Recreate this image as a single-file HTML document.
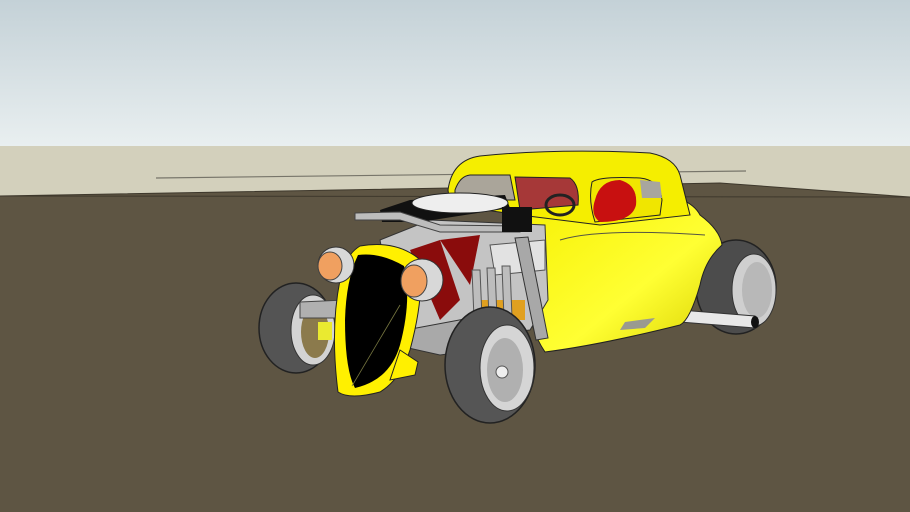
<!DOCTYPE html>
<html><head><meta charset="utf-8"><style>
html,body{margin:0;padding:0;width:910px;height:512px;overflow:hidden}
svg{display:block}
</style></head><body>
<svg width="910" height="512" viewBox="0 0 910 512" xmlns="http://www.w3.org/2000/svg">
<defs>
<linearGradient id="sky" x1="0" y1="0" x2="0" y2="1">
<stop offset="0" stop-color="#c4d1d7"/><stop offset="1" stop-color="#e9eff0"/>
</linearGradient>
<linearGradient id="yel" x1="0" y1="0" x2="1" y2="1">
<stop offset="0" stop-color="#f6f000"/><stop offset="0.6" stop-color="#ffff33"/><stop offset="1" stop-color="#d8d000"/>
</linearGradient>
</defs>
<rect width="910" height="146" fill="url(#sky)"/>
<rect y="146" width="910" height="60" fill="#d3d0bc"/>
<line x1="156" y1="178" x2="746" y2="171" stroke="#77756a" stroke-width="1.2"/>
<polygon points="0,196 450,188 720,183 910,197 910,512 0,512" fill="#5e5543"/>
<polygon points="0,196 450,188 720,183 910,197" fill="none" stroke="#3e382c" stroke-width="1"/>

<!-- rear wheel -->
<ellipse cx="736" cy="287" rx="40" ry="47" fill="#4c4c4c" stroke="#222" stroke-width="1.5"/>
<ellipse cx="754" cy="290" rx="22" ry="36" fill="#cfcfcf" stroke="#333"/>
<ellipse cx="757" cy="290" rx="15" ry="28" fill="#b8b8b8"/>
<!-- exhaust -->
<path d="M680,310 L755,316 L755,328 L680,322 Z" fill="#e8e8e8" stroke="#333"/>
<ellipse cx="755" cy="322" rx="4" ry="6" fill="#111"/>

<!-- body -->
<path d="M520,205 Q560,190 640,190 Q690,195 700,215 Q720,230 722,245 Q705,260 700,285 Q690,320 680,325 Q600,345 545,352 Q530,330 528,300 Z" fill="url(#yel)" stroke="#222"/>
<!-- roof -->
<path d="M448,190 Q452,160 480,156 Q560,148 650,153 Q675,158 680,175 L690,215 L600,225 L520,215 L450,205 Z" fill="#f5ee00" stroke="#222"/>
<path d="M455,190 Q460,176 470,175 L510,175 L515,200 L455,200 Z" fill="#aaa59a" stroke="#222"/>
<path d="M515,177 L570,178 Q580,185 578,205 L520,210 Z" fill="#a63838" stroke="#222"/>
<path d="M592,182 Q600,176 640,178 Q660,180 662,200 L660,215 L595,222 Q588,200 592,182 Z" fill="#f0e600" stroke="#222"/>
<path d="M595,200 Q600,180 620,180 Q638,185 636,205 Q632,222 600,222 Q590,215 595,200 Z" fill="#c81010"/>
<path d="M640,180 L660,182 L662,198 L642,198 Z" fill="#a8a69e"/>
<ellipse cx="560" cy="205" rx="14" ry="10" fill="none" stroke="#222" stroke-width="3"/>
<path d="M625,322 L655,318 L645,328 L620,330 Z" fill="#9a9a90"/>
<path d="M560,240 Q600,228 705,235" fill="none" stroke="#554" stroke-width="1"/>

<!-- engine -->
<path d="M380,240 L430,220 L545,225 L548,300 L530,330 L440,340 L395,320 Z" fill="#c4c4c4" stroke="#333"/>
<path d="M410,250 L440,240 L460,300 L440,320 Z" fill="#8a0c0c"/>
<path d="M440,240 L480,235 L470,285 Z" fill="#8a0c0c"/>
<path d="M490,245 L545,240 L545,270 L495,275 Z" fill="#e2e2e2" stroke="#555"/>
<path d="M480,300 L525,300 L525,320 L480,320 Z" fill="#e0a020"/>
<g stroke="#555" fill="#bdbdbd">
<path d="M472,270 L480,270 L482,318 L474,318 Z"/>
<path d="M487,268 L495,268 L497,318 L489,318 Z"/>
<path d="M502,266 L510,266 L512,318 L504,318 Z"/>
</g>
<!-- air cleaner -->
<path d="M380,210 L410,200 L505,195 L510,208 L420,222 L382,222 Z" fill="#111"/>
<ellipse cx="460" cy="203" rx="48" ry="10" fill="#eeeeee" stroke="#222"/>
<path d="M355,213 L400,212 L440,225 L520,226 L520,232 L440,232 L400,220 L355,220 Z" fill="#bdbdbd" stroke="#444"/>
<rect x="502" y="207" width="30" height="25" fill="#111"/>
<!-- upright pipe -->
<path d="M515,238 L528,237 L548,338 L536,340 Z" fill="#a8a8a8" stroke="#333"/>

<!-- frame under -->
<path d="M395,332 L470,318 L520,322 L515,345 L440,355 L395,345 Z" fill="#a9a9a9" stroke="#333"/>

<!-- front left wheel -->
<ellipse cx="296" cy="328" rx="37" ry="45" fill="#545454" stroke="#222" stroke-width="1.5"/>
<ellipse cx="313" cy="330" rx="22" ry="35" fill="#d3d3d3" stroke="#333"/>
<ellipse cx="315" cy="332" rx="14" ry="26" fill="#8b7a4c"/>
<rect x="318" y="322" width="14" height="18" fill="#eaea30"/>
<path d="M300,302 L345,300 L345,318 L300,318 Z" fill="#b0b0b0" stroke="#444"/>

<!-- grille shell -->
<path d="M360,246 Q395,240 418,258 Q426,290 410,350 Q400,380 380,392 Q350,400 338,392 Q330,330 340,280 Q345,255 360,246 Z" fill="#fff000" stroke="#222"/>
<path d="M358,255 Q380,252 404,266 Q412,300 400,345 Q390,380 355,388 Q345,370 345,320 Q346,280 358,255 Z" fill="#000"/>
<line x1="400" y1="305" x2="352" y2="386" stroke="#777740" stroke-width="0.8"/>
<path d="M400,350 L418,362 L415,375 L390,380 Z" fill="#fff000" stroke="#222"/>

<!-- headlights -->
<ellipse cx="336" cy="265" rx="18" ry="18" fill="#d8d8d8" stroke="#333"/>
<ellipse cx="330" cy="266" rx="12" ry="14" fill="#f0a060" stroke="#444"/>
<ellipse cx="422" cy="280" rx="21" ry="21" fill="#d8d8d8" stroke="#333"/>
<ellipse cx="414" cy="281" rx="13" ry="16" fill="#f0a060" stroke="#444"/>

<!-- front right wheel -->
<ellipse cx="490" cy="365" rx="45" ry="58" fill="#555" stroke="#222" stroke-width="1.5"/>
<ellipse cx="507" cy="368" rx="27" ry="43" fill="#d5d5d5" stroke="#333"/>
<ellipse cx="505" cy="370" rx="18" ry="32" fill="#b0b0b0"/>
<circle cx="502" cy="372" r="6" fill="#eee" stroke="#555"/>
</svg>
</body></html>
